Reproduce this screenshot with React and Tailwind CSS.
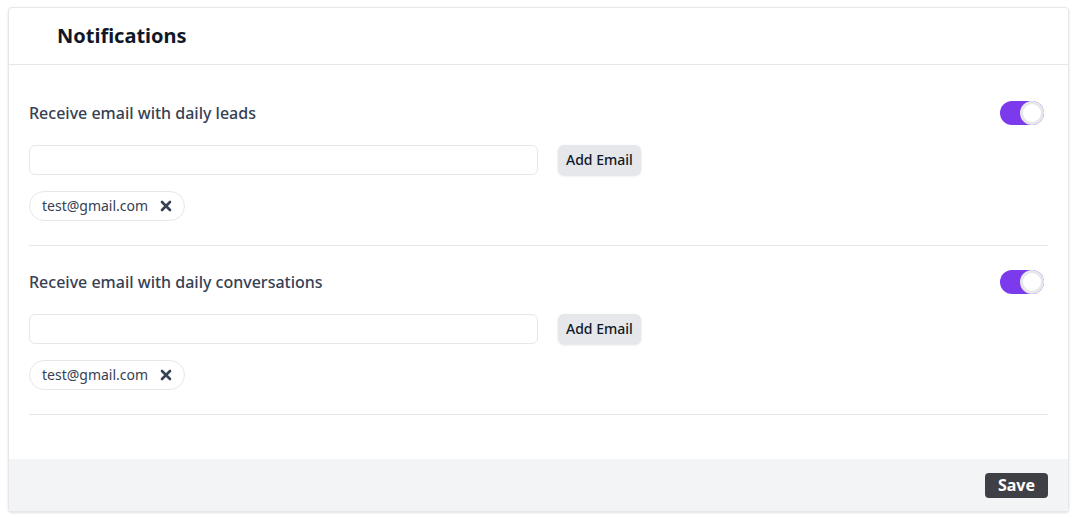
import React, { useState } from 'react'

const font = { fontFamily: '"Noto Sans", "Open Sans", sans-serif' }

const Toggle = ({ on, onChange }) => (
  <button
    type="button"
    onClick={() => onChange(!on)}
    className={`relative mr-1 flex h-6 w-11 items-center rounded-full ${on ? 'bg-[#7c3aed]' : 'bg-gray-200'}`}
  >
    <span
      className={`h-6 w-6 rounded-full border-[3px] border-gray-200 bg-white ${on ? 'ml-5' : 'ml-0'}`}
    />
  </button>
)

const Chip = ({ email }) => (
  <span className="inline-flex h-[30px] items-center gap-3 rounded-full border border-gray-200 bg-white pl-3 pr-3 text-sm text-gray-700">
    {email}
    <svg width="12" height="12" viewBox="0 0 12 12" className="text-gray-700">
      <path d="M2 2 L10 10 M10 2 L2 10" stroke="currentColor" strokeWidth="2.6" strokeLinecap="round" />
    </svg>
  </span>
)

const Section = ({ title }) => {
  const [on, setOn] = useState(true)
  return (
    <div className="border-b border-gray-200 py-6">
      <div className="flex items-center justify-between">
        <h3 className="text-base font-medium text-gray-700">{title}</h3>
        <Toggle on={on} onChange={setOn} />
      </div>
      <div className="mt-5 flex items-center gap-5">
        <input className="h-[30px] w-[509px] rounded-md border border-gray-200 px-3 text-sm outline-none" />
        <button className="h-[30px] rounded-md bg-gray-200 px-2 text-sm font-medium text-gray-900 shadow-sm">
          Add Email
        </button>
      </div>
      <div className="mt-4 flex">
        <Chip email="test@gmail.com" />
      </div>
    </div>
  )
}

export default function App() {
  return (
    <div className="min-h-screen bg-white p-2 pt-[7px]" style={font}>
      <div className="w-[1061px] rounded-sm border border-gray-200 bg-white shadow-sm">
        <div className="flex h-[57px] items-center border-b border-gray-200 px-12">
          <h2 className="text-xl font-bold text-gray-900">Notifications</h2>
        </div>
        <div className="px-5 pb-11 pt-3">
          <Section title="Receive email with daily leads" />
          <Section title="Receive email with daily conversations" />
        </div>
        <div className="flex h-[52px] items-center justify-end bg-gray-100 px-5">
          <button className="h-[25px] rounded-sm bg-[#3f3f46] px-[13px] text-base font-bold leading-none text-white">
            Save
          </button>
        </div>
      </div>
    </div>
  )
}
